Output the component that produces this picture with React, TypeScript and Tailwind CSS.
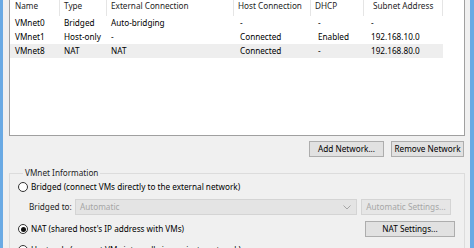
import React from 'react';

const rows = [
  { name: 'VMnet0', type: 'Bridged', ext: 'Auto-bridging', host: '-', dhcp: '-', subnet: '-' },
  { name: 'VMnet1', type: 'Host-only', ext: '-', host: 'Connected', dhcp: 'Enabled', subnet: '192.168.10.0' },
  { name: 'VMnet8', type: 'NAT', ext: 'NAT', host: 'Connected', dhcp: '-', subnet: '192.168.80.0', selected: true },
];

const cols = 'grid grid-cols-[50px_47px_127px_77px_53px_79px]';

const Radio: React.FC<{ checked?: boolean }> = ({ checked }) => (
  <span className="w-[10px] h-[10px] rounded-full border border-[#333] bg-white flex items-center justify-center shrink-0">
    {checked && <span className="w-[5px] h-[5px] rounded-full bg-[#111]"></span>}
  </span>
);

const Button: React.FC<{ label: string; disabled?: boolean; className?: string }> = ({ label, disabled, className }) => (
  <div
    className={`h-[16px] flex items-center justify-center border whitespace-nowrap ${
      disabled ? 'border-[#d4d4d4] bg-[#e6e6e6] text-[#a6a6a6]' : 'border-[#adadad] bg-[#e1e1e1] text-black'
    } ${className ?? ''}`}
  >
    {label}
  </div>
);

export default function App() {
  return (
    <div
      className="w-[474px] h-[248px] overflow-hidden flex bg-[#f0f0f0] text-[8.2px] text-black leading-none whitespace-nowrap"
      style={{ fontFamily: '"Noto Sans", "Open Sans", sans-serif' }}
    >
      <div className="w-[3px] bg-[#6aaae4] shrink-0"></div>
      <div className="flex-1 flex flex-col pl-[6px] pr-[5px]">
        {/* Network list */}
        <div className="-mt-px h-[137px] border border-[#a0a0a0] bg-white shrink-0">
          <div className={`${cols} h-[16px] text-[#1e1e1e]`}>
            {['Name', 'Type', 'External Connection', 'Host Connection', 'DHCP', 'Subnet Address'].map((h, i) => (
              <div
                key={h}
                className={`flex items-center pb-[3px] border-r border-[#e5e5e5] ${
                  i === 5 ? 'pl-[9px]' : i === 0 ? 'pl-[5px]' : 'pl-[4px]'
                }`}
              >
                {h}
              </div>
            ))}
          </div>
          {rows.map(r => (
            <div key={r.name} className={`${cols} h-[14px] w-[433px] ${r.selected ? 'bg-[#eeeeee]' : ''}`}>
              <div className="flex items-center pl-[5px]">{r.name}</div>
              <div className="flex items-center pl-[4px]">{r.type}</div>
              <div className="flex items-center pl-[4px]">{r.ext}</div>
              <div className="flex items-center pl-[6px]">{r.host}</div>
              <div className="flex items-center pl-[7px]">{r.dhcp}</div>
              <div className="flex items-center pl-[7px]">{r.subnet}</div>
            </div>
          ))}
        </div>

        {/* Add / remove */}
        <div className="flex justify-end gap-[7px] mt-[5px] pr-[1px]">
          <Button label="Add Network..." className="w-[75px]" />
          <Button label="Remove Network" className="w-[73px]" />
        </div>

        {/* VMnet information group */}
        <fieldset className="mt-[12px] border border-[#dcdcdc] pl-[8px] pr-[9px] pb-[10px] min-w-0">
          <legend className="ml-[5px] px-[2px] text-[#1e1e1e]">VMnet Information</legend>
          <div className="flex items-center gap-[3px] h-[14px] mt-[3px]">
            <Radio />
            <span>Bridged (connect VMs directly to the external network)</span>
          </div>
          <div className="flex items-center h-[16px] mt-[5px] pl-[11px]">
            <span className="w-[46px] text-[#1e1e1e]">Bridged to:</span>
            <div className="w-[282px] h-[16px] border border-[#d4d4d4] bg-[#e4e4e4] flex items-center justify-between pl-[4px] pr-[5px] text-[#a6a6a6]">
              <span>Automatic</span>
              <svg width="8" height="5" viewBox="0 0 8 5">
                <path d="M0.5 0.5 L4 4 L7.5 0.5" fill="none" stroke="#a6a6a6" strokeWidth="1" />
              </svg>
            </div>
            <Button label="Automatic Settings..." disabled className="w-[90px] ml-[4px]" />
          </div>
          <div className="flex items-center justify-between h-[16px] mt-[6px]">
            <div className="flex items-center gap-[3px]">
              <Radio checked />
              <span>NAT (shared host's IP address with VMs)</span>
            </div>
            <Button label="NAT Settings..." className="w-[90px]" />
          </div>
          <div className="flex items-center gap-[3px] h-[14px] mt-[6px]">
            <Radio />
            <span>Host-only (connect VMs internally in a private network)</span>
          </div>
        </fieldset>
      </div>
      <div className="w-[4px] bg-[#6aaae4] shrink-0"></div>
    </div>
  );
}
